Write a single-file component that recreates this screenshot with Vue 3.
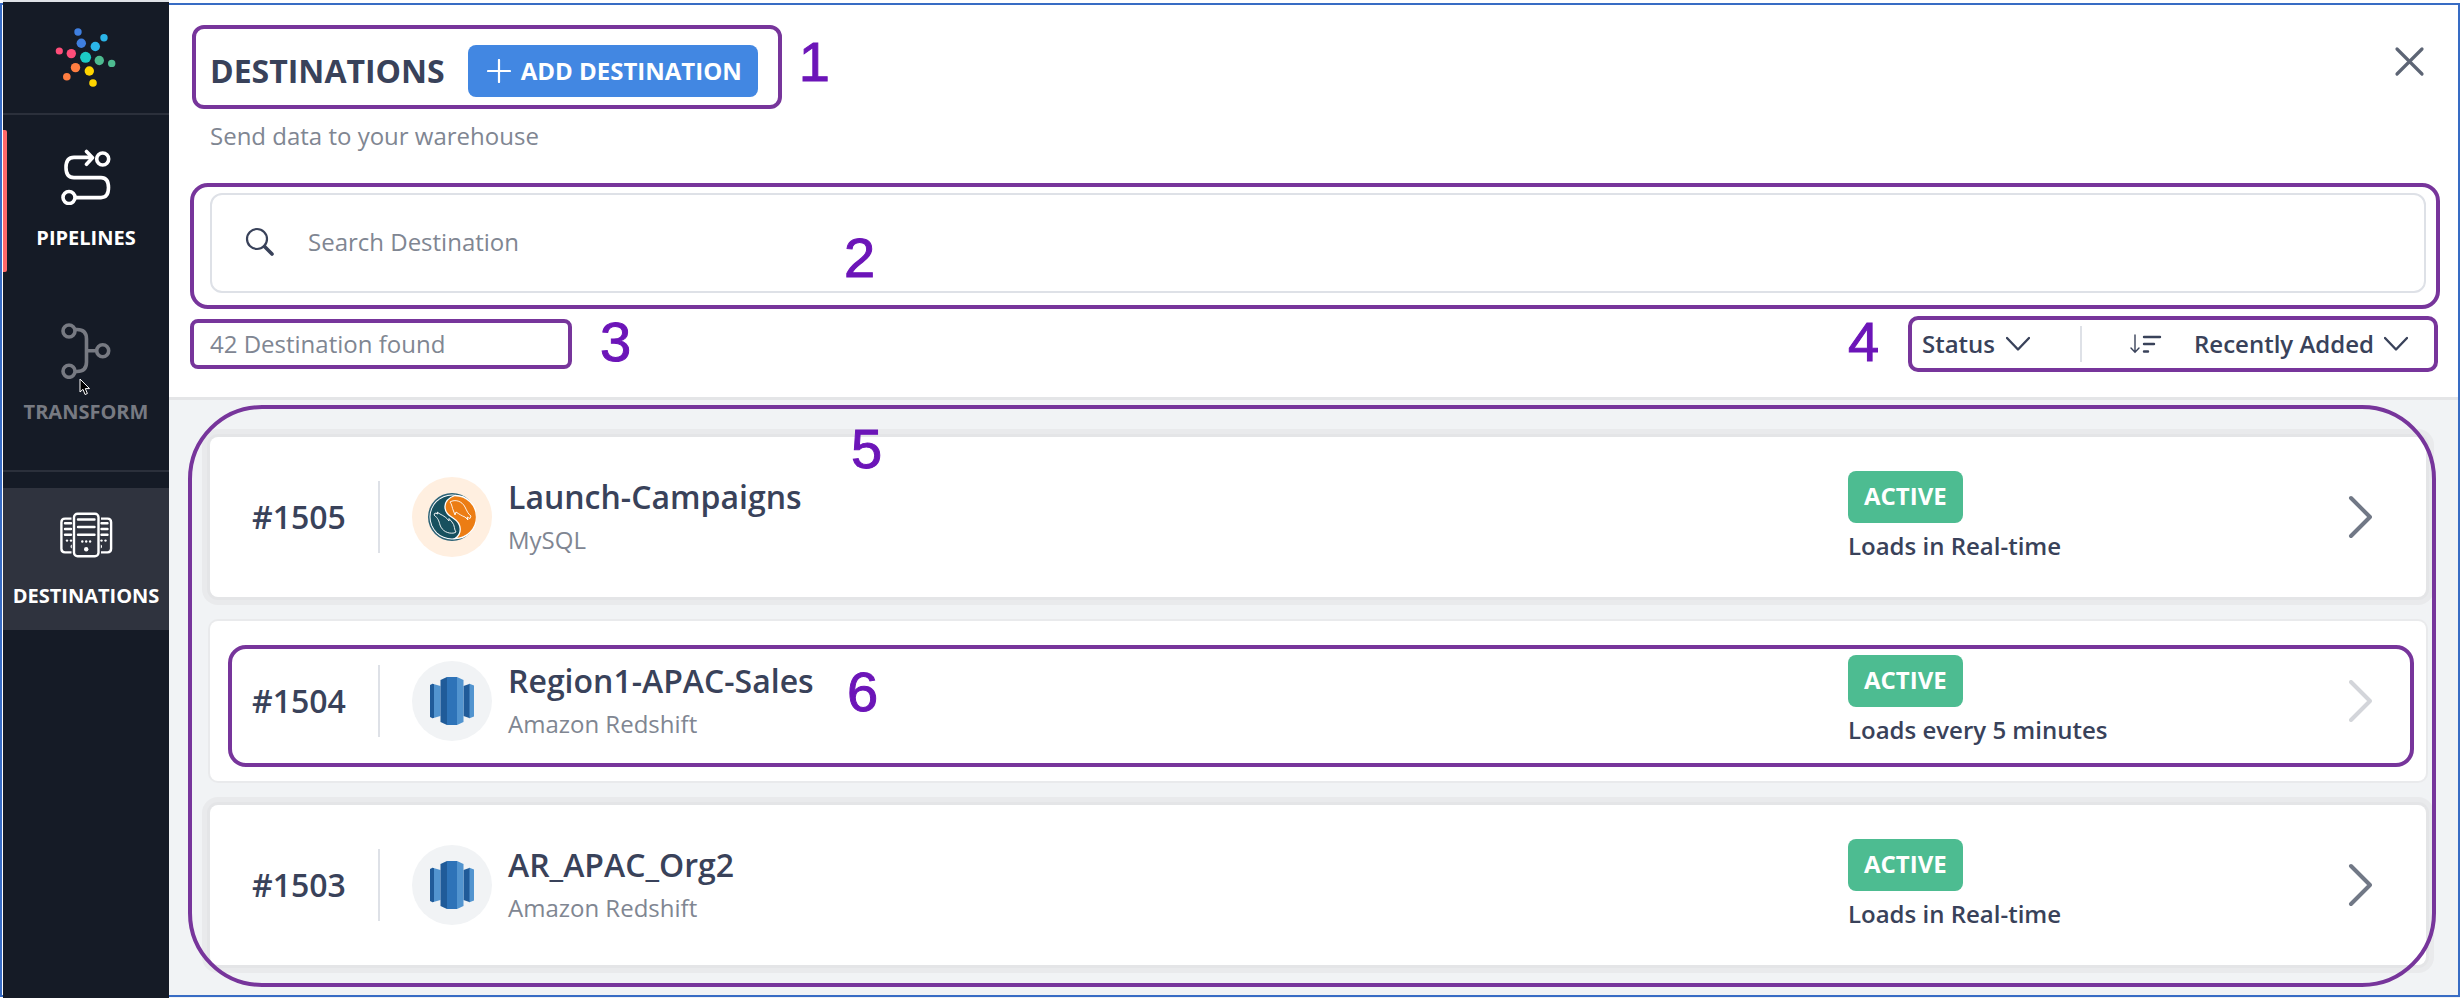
<script setup>
const navigation = [
  { id: 'pipelines', label: 'PIPELINES' },
  { id: 'transform', label: 'TRANSFORM' },
  { id: 'destinations', label: 'DESTINATIONS' },
]

const logoDots = [
  [78, 32, 3.7, '#3f7fe0'], [81.3, 43.3, 4.7, '#3f7fe0'],
  [104, 37.7, 3.7, '#2bb5e8'], [95.3, 46.5, 4.7, '#2bb5e8'],
  [59.3, 51, 3.6, '#ff4d79'], [71.3, 53.6, 4.7, '#ff4d79'],
  [85.6, 57.3, 5.5, '#1ccbc6'],
  [99.3, 60.5, 4.7, '#4dbb90'], [111.7, 63.4, 3.7, '#4dbb90'],
  [75.5, 67.6, 4.7, '#ff7e41'], [66.8, 76.7, 3.8, '#ff7e41'],
  [89.3, 71, 4.7, '#ffd500'], [93, 83, 3.8, '#ffd500'],
]

const destinations = [
  { id: 1505, name: 'Launch-Campaigns', type: 'MySQL', schedule: 'Loads in Real-time', raised: true },
  { id: 1504, name: 'Region1-APAC-Sales', type: 'Amazon Redshift', schedule: 'Loads every 5 minutes', raised: false },
  { id: 1503, name: 'AR_APAC_Org2', type: 'Amazon Redshift', schedule: 'Loads in Real-time', raised: true },
]
</script>

<template>
  <div class="page">
    <div class="frame" aria-hidden="true"></div>

    <aside class="sidebar">
      <a class="logo" href="#" aria-label="Home">
        <svg width="70" height="66" viewBox="51 25 70 66">
          <circle v-for="(dot, i) in logoDots" :key="i" :cx="dot[0]" :cy="dot[1]" :r="dot[2]" :fill="dot[3]" />
        </svg>
      </a>
      <nav class="nav">
        <a v-for="item in navigation" :key="item.id" href="#" class="nav-item" :class="item.id">
          <svg v-if="item.id === 'pipelines'" class="nav-icon" viewBox="58 149 56 56" stroke-width="3.6">
            <circle cx="102.7" cy="159" r="6" />
            <circle cx="69" cy="197.5" r="6" />
            <path d="M91 157.4H74C68.500 157.400 66 161 66 167.500S68.500 177.600 74 177.600H101C106 177.600 108.500 181 108.500 187.600S106 197.600 101 197.600H76" />
            <path d="M86.500 151.500L92.500 157.800L86.500 164.300" stroke-linecap="round" stroke-linejoin="round" />
          </svg>
          <svg v-else-if="item.id === 'transform'" class="nav-icon" viewBox="58 323 56 56" stroke-width="3.6">
            <circle cx="69" cy="331" r="6" />
            <circle cx="69" cy="371.3" r="6" />
            <circle cx="102.7" cy="350.7" r="6" />
            <path d="M75 329.500H77Q86.500 329.500 86.500 339V362Q86.500 371.500 77 371.500H75M86.500 350.700H96" />
          </svg>
          <svg v-else class="nav-icon" viewBox="58 507 56 56" stroke-width="2.4">
            <rect x="74" y="513.7" width="24.500" height="42.600" rx="3.500" />
            <path d="M71.500 518.600H65Q61.400 518.600 61.400 522.200V548.800Q61.400 552.400 65 552.400H71.500M101 518.600H107.500Q111.100 518.600 111.100 522.200V548.800Q111.100 552.400 107.500 552.400H101" />
            <path d="M78 519.500H94.500M78 527H94.500M78 534.700H94.500M65 523.300H71M65 529H71M65 534.700H71M101.500 523.300H107.500M101.500 529H107.500M101.500 534.700H107.500" stroke-linecap="round" />
            <g fill="currentColor" stroke="none">
              <circle cx="82.300" cy="541.500" r="1.200" /><circle cx="86.200" cy="541.500" r="1.200" /><circle cx="90.100" cy="541.500" r="1.200" />
              <circle cx="86.200" cy="549.300" r="2.200" />
              <circle cx="67" cy="540.600" r="1.200" /><circle cx="71" cy="540.600" r="1.200" />
              <circle cx="101.500" cy="540.600" r="1.200" /><circle cx="105.500" cy="540.600" r="1.200" />
              <path d="M71.800 544.500A2.200 2.200 0 0 0 71.800 548.500ZM100.800 544.500A2.200 2.200 0 0 1 100.800 548.500Z" />
            </g>
          </svg>
          <svg v-if="item.id === 'transform'" class="cursor" width="12" height="18" viewBox="0 0 12 18">
            <path d="M1 1V14L4 11.300L6 16.500L8.400 15.500L6.300 10.600H10.500Z" fill="#000" stroke="#fff" />
          </svg>
          <span class="nav-label">{{ item.label }}</span>
        </a>
      </nav>
    </aside>

    <main class="main">
      <header class="header">
        <div class="title-row">
          <div class="title-group">
            <h1>DESTINATIONS</h1>
            <button type="button" class="add">
              <svg width="24" height="24" viewBox="0 0 24 24"><path d="M12 1V23M1 12H23" stroke="#fff" stroke-width="2.200" stroke-linecap="round" /></svg>
              ADD DESTINATION
            </button>
            <span class="outline outline-1"></span>
            <span class="number number-1">1</span>
          </div>
          <button type="button" class="close" aria-label="Close">
            <svg width="32" height="32" viewBox="0 0 32 32"><path d="M3 4L28 29M28 4L3 29" stroke="#5d6575" stroke-width="3.200" stroke-linecap="round" /></svg>
          </button>
        </div>
        <p class="subtitle">Send data to your warehouse</p>

        <div class="search-group">
          <label class="search">
            <svg width="30" height="30" viewBox="0 0 30 30" fill="none" stroke="#39425a">
              <circle cx="12" cy="12" r="10" stroke-width="2.200" />
              <path d="M19.500 19.500L27 27" stroke-width="3.600" stroke-linecap="round" />
            </svg>
            <input type="search" placeholder="Search Destination" aria-label="Search Destination">
          </label>
          <span class="outline outline-2"></span>
          <span class="number number-2">2</span>
        </div>

        <div class="results-row">
          <div class="count">
            42 Destination found
            <span class="outline outline-3"></span>
            <span class="number number-3">3</span>
          </div>
          <div class="filters">
            <label class="picker">
              <select aria-label="Filter by status"><option>Status</option></select>
              <svg class="caret" viewBox="0 0 24 16"><path d="M1 2L12 13.500L23 2" /></svg>
            </label>
            <span class="separator"></span>
            <label class="picker sort">
              <svg width="32" height="20" viewBox="0 0 32 20" fill="none" stroke="#39425a" stroke-linecap="round">
                <path d="M5 1V18M1 14L5 18.300L9 14" stroke-width="1.400" />
                <path d="M14 3H30M14 10H24M14 17.500H18" stroke-width="2.400" />
              </svg>
              <select aria-label="Sort by"><option>Recently Added</option></select>
              <svg class="caret" viewBox="0 0 24 16"><path d="M1 2L12 13.500L23 2" /></svg>
            </label>
            <span class="outline outline-4"></span>
            <span class="number number-4">4</span>
          </div>
        </div>
      </header>

      <section class="list" aria-label="Destinations">
        <article v-for="item in destinations" :key="item.id" class="card" :class="{ raised: item.raised }">
          <span class="card-id">#{{ item.id }}</span>
          <span class="badge-icon" :class="{ mysql: item.type === 'MySQL' }">
            <svg v-if="item.type === 'MySQL'" width="48" height="48" viewBox="0 0 48 48">
              <circle cx="24" cy="24" r="24" fill="#2c6276" />
              <circle cx="24" cy="24" r="22.500" fill="#fff" />
              <circle cx="24" cy="24" r="21.500" fill="#17505f" />
              <path d="M27 2.500A21.500 21.500 0 0 1 27 45.500C34 41 34.500 31 25 25C14 19 14 7 27 2.500Z" fill="#ec7d14" stroke="#fff" stroke-width="1.300" />
              <g fill="none" stroke="#fff" stroke-width=".900" stroke-linejoin="round">
                <path d="M22 9C27 6 34 8 37 14C39 18 40 21 43 23L42 25.500L39 24L40 27L37 24C34 23 31 21 28 19L27 22L25.500 18C24 15 24 11 22 9Z" />
                <path d="M26 40C20 41 14 38 12 32C11 28 10 25 6 22L7 20L10 21L9 19L12 21C16 23 19 25 21 28L21 25.500L24 29C27 32 26 37 28 39Z" />
              </g>
            </svg>
            <svg v-else width="48" height="48" viewBox="0 0 48 48">
              <path d="M4.500 6.800L12.500 9V39L4.500 41.200Z" fill="#5294cf" />
              <path d="M2 8L4.500 6.800L6 7.200V40.800L4.500 41.200L2 40Z" fill="#205b99" />
              <path d="M35.500 9L42 6.800V41.200L35.500 39Z" fill="#205b99" />
              <path d="M41.500 6.800L46 8.500V39.500L41.500 41.200Z" fill="#5294cf" />
              <path d="M12.500 3L19 0V48L12.500 45Z" fill="#205b99" />
              <path d="M19 0H29V48H19Z" fill="#2e73b8" />
              <path d="M29 0L35.500 3V45L29 48Z" fill="#5294cf" />
            </svg>
          </span>
          <div class="card-name">
            <h2>{{ item.name }}</h2>
            <p>{{ item.type }}</p>
          </div>
          <div class="card-state">
            <span class="status">ACTIVE</span>
            <span class="schedule">{{ item.schedule }}</span>
          </div>
          <a href="#" class="open" :aria-label="'Open ' + item.name">
            <svg width="24" height="44" viewBox="0 0 24 44"><path d="M3 3L22 22L3 41" /></svg>
          </a>
          <template v-if="item.id === 1504">
            <span class="outline outline-6"></span>
            <span class="number number-6">6</span>
          </template>
        </article>
        <span class="outline outline-5"></span>
        <span class="number number-5">5</span>
      </section>
    </main>
  </div>
</template>

<style>
body {
  margin: 0;
  background: #fff;
}
</style>

<style scoped>
* {
  box-sizing: border-box;
}

.page {
  position: relative;
  display: flex;
  min-height: 100vh;
  padding-left: 3px;
  background: #fff;
  color: #39425a;
  font-family: "Open Sans", "Noto Sans", sans-serif;
  font-size: 24px;
  line-height: 32px;
}

.frame {
  position: absolute;
  inset: 3px 0 1px;
  z-index: 1;
  border: 2px solid #386cc4;
  pointer-events: none;
}

h1, h2, p {
  margin: 0;
}

a {
  color: inherit;
  text-decoration: none;
}

svg {
  display: block;
  flex: none;
  fill: none;
}

/* Sidebar */
.sidebar {
  position: relative;
  z-index: 2;
  flex: none;
  width: 166px;
  border-top: 2px solid #dfe2e6;
  background: #151b26;
  color: #fff;
}

.logo {
  display: flex;
  align-items: center;
  justify-content: center;
  height: 113px;
  border-bottom: 2px solid #2b303b;
}

.nav {
  padding-top: 15px;
}

.nav-item {
  position: relative;
  display: flex;
  flex-direction: column;
  align-items: center;
  gap: 19px;
  height: 142px;
  padding-top: 19px;
}

.pipelines::before {
  content: "";
  position: absolute;
  inset: 0 auto 0 0;
  width: 4px;
  border-radius: 0 2px 2px 0;
  background: #ff6868;
}

.transform {
  margin: 32px 0 42px;
  color: #777a82;
}

.destinations {
  background: #2f333e;
}

.destinations::before {
  content: "";
  position: absolute;
  inset: -18px 0 auto;
  height: 2px;
  background: #2b303b;
}

.nav-icon {
  width: 56px;
  height: 56px;
  stroke: currentColor;
}

.nav-label {
  font-size: 20px;
  font-weight: 700;
  line-height: 28px;
}

.cursor {
  position: absolute;
  top: 74px;
  left: 76px;
}

/* Header */
.main {
  display: flex;
  flex: 1;
  flex-direction: column;
  min-width: 0;
}

.header {
  padding: 45px 34px 24px 41px;
  border-bottom: 3px solid #e4e5e7;
}

.title-row {
  display: flex;
  justify-content: space-between;
}

.title-group {
  position: relative;
  display: flex;
  align-items: center;
  gap: 23px;
}

h1 {
  font-size: 32px;
  font-weight: 700;
  line-height: 44px;
}

button {
  border: 0;
  font: inherit;
  cursor: pointer;
}

.add {
  display: flex;
  align-items: center;
  gap: 10px;
  height: 52px;
  padding: 0 16px 0 19px;
  border-radius: 8px;
  background: #4287e2;
  color: #fff;
  font-weight: 700;
  line-height: 50px;
}

.close {
  align-self: flex-start;
  padding: 0;
  background: none;
}

.subtitle {
  margin-top: 23px;
  color: #808692;
}

.search-group {
  position: relative;
  margin-top: 41px;
}

.search {
  display: flex;
  align-items: center;
  gap: 33px;
  height: 100px;
  padding: 0 33px 2px;
  border: 2px solid #dee1e7;
  border-radius: 12px;
}

.search input {
  flex: 1;
  min-width: 0;
  padding: 0;
  border: 0;
  outline: 0;
  background: none;
  color: #39425a;
  font: inherit;
}

.search input::placeholder {
  color: #808692;
  opacity: 1;
}

.results-row {
  display: flex;
  align-items: center;
  justify-content: space-between;
  height: 54px;
  margin: 24px 0 26px;
  height: 54px;
}

.header {
  padding-bottom: 0;
}

.count {
  position: relative;
  width: 362px;
  color: #808692;
}

.filters {
  position: relative;
  display: flex;
  align-items: center;
  height: 32px;
  padding-right: 18px;
}

.picker {
  display: flex;
  align-items: center;
  gap: 10px;
}

.picker select {
  appearance: none;
  padding: 0;
  border: 0;
  outline: 0;
  background: none;
  color: #39425a;
  font: inherit;
  font-weight: 600;
}

.sort > :first-child {
  margin-right: 22px;
}

.caret {
  width: 24px;
  height: 16px;
  stroke: #39425a;
  stroke-width: 2.4px;
  stroke-linecap: round;
  stroke-linejoin: round;
}

.separator {
  width: 2px;
  height: 36px;
  margin: 0 48px 0 50px;
  background: #dee1e7;
}

/* Destination cards */
.list {
  position: relative;
  display: flex;
  flex: 1;
  flex-direction: column;
  gap: 24px;
  padding: 37px 34px 33px 41px;
  background: #f1f3f5;
}

.card {
  position: relative;
  display: grid;
  grid-template-columns: 128px 80px 1fr 500px 24px;
  align-items: center;
  height: 160px;
  padding: 0 54px 0 42px;
  border-radius: 8px;
  background: #fff;
  box-shadow: 0 0 0 2px #e9eaec;
}

.raised {
  box-shadow: 0 0 0 3px #e4e5e7, 0 0 0 8px #e9eaec;
}

.card-id {
  height: 72px;
  border-right: 2px solid #dee1e7;
  font-size: 32px;
  font-weight: 600;
  line-height: 72px;
}

.badge-icon {
  display: grid;
  place-items: center;
  width: 80px;
  height: 80px;
  margin-left: 32px;
  border-radius: 50%;
  background: #f1f3f5;
}

.mysql {
  background: #ffefe0;
}

.card-name {
  padding-left: 48px;
}

.card-name h2 {
  font-size: 32px;
  font-weight: 600;
  line-height: 46px;
}

.card-name p {
  color: #808692;
  line-height: 40px;
}

.card-state {
  display: flex;
  flex-direction: column;
  align-items: flex-start;
  gap: 5px;
}

.status {
  height: 52px;
  padding: 0 16px;
  border-radius: 8px;
  background: #4dbc91;
  color: #fff;
  font-weight: 700;
  line-height: 50px;
}

.schedule {
  font-weight: 600;
  line-height: 36px;
}

.open {
  opacity: 0.3;
}

.open svg {
  stroke: #717886;
  stroke-width: 4px;
  stroke-linecap: round;
  stroke-linejoin: round;
}

.raised .open {
  opacity: 1;
}

/* Numbered callouts laid over the page */
.outline {
  position: absolute;
  z-index: 3;
  border: 4px solid #77359b;
  pointer-events: none;
}

.number {
  position: absolute;
  z-index: 3;
  color: #6c15b8;
  font-family: "Liberation Sans", Arial, sans-serif;
  font-size: 56px;
  font-weight: 400;
  line-height: 56px;
  -webkit-text-stroke: 1px #6c15b8;
  pointer-events: none;
}

.outline-1 { inset: -20px -24px -12px -18px; border-radius: 12px; }
.outline-2 { inset: -10px -14px -16px -20px; border-radius: 18px; }
.outline-3 { inset: -9px 0 -9px -20px; border-radius: 8px; }
.outline-4 { inset: -12px -12px -12px -14px; border-radius: 10px; }
.outline-5 { inset: 5px 24px 11px 19px; border-radius: 74px; }
.outline-6 { inset: 24px 12px 14px 18px; border-radius: 18px; }

.number-1 { top: -11px; left: calc(100% + 41px); }
.number-2 { top: 37px; left: 634px; }
.number-3 { top: -14px; left: 390px; }
.number-4 { top: -14px; left: -74px; }
.number-5 { top: 21px; left: 682px; }
.number-6 { top: 43px; left: 637px; }
</style>
